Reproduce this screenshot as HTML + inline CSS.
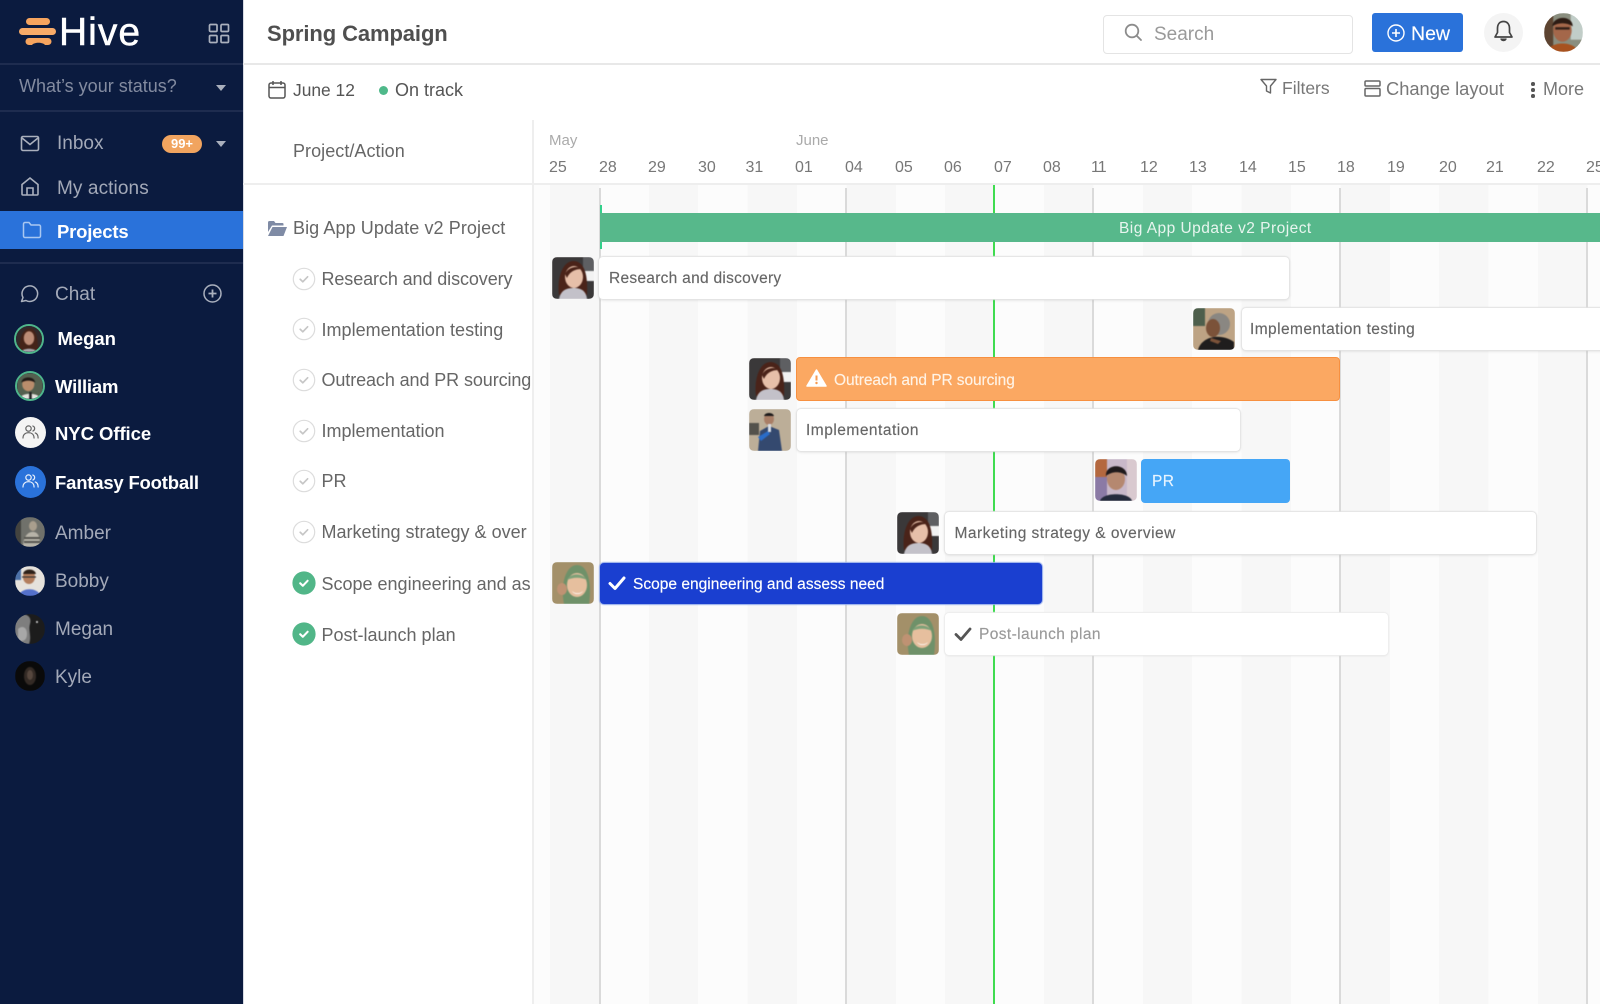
<!DOCTYPE html>
<html><head><meta charset="utf-8"><title>Spring Campaign</title>
<style>
html,body{margin:0;padding:0;width:1600px;height:1004px;overflow:hidden;background:#fff;font-family:"Liberation Sans",sans-serif;color:#666}
#root{position:absolute;left:0;top:0;width:1600px;height:1004px;overflow:hidden;filter:blur(.35px)}
.a{position:absolute;white-space:nowrap}
.t{position:absolute;white-space:nowrap;line-height:24px;height:24px;transform:translateY(-12px)}
#side{position:absolute;left:0;top:0;width:243px;height:1004px;background:#0b1b3f;border-right:1px solid #d8dbe3;overflow:hidden}
.s{font-size:19px;color:#a3a9b8}
.w{color:#fff;font-weight:bold;font-size:18.5px;letter-spacing:-.2px}
.tree{font-size:18px;color:#666;overflow:hidden;width:210px}
.d{position:absolute;top:155.5px;font-size:16px;color:#777;line-height:24px}
.av{position:absolute;width:42px;height:42px;border-radius:5px;overflow:hidden}
.av svg,.ca svg{display:block;width:100%;height:100%;filter:blur(.6px)}
.ca{position:absolute;width:30px;height:30px;border-radius:50%;overflow:hidden}
.bar{position:absolute;border-radius:4px;box-sizing:border-box;background:#fff;box-shadow:0 0 1px 1px #e3e3e3,0 1px 3px rgba(0,0,0,.12);font-size:15.5px;color:#666;letter-spacing:.4px;white-space:nowrap;-webkit-text-stroke:.15px currentColor}
.bar span{position:absolute;top:50%;transform:translateY(calc(-50% + 1px))}
.vl{position:absolute;top:188px;width:2px;height:816px;background:#dadada}
.ck{position:absolute;left:292px;width:24px;height:24px}
</style></head><body>

<svg width="0" height="0" style="position:absolute">
<defs>
<symbol id="w1" viewBox="0 0 42 42"><rect width="42" height="42" fill="#3a3839"/><rect x="31" y="0" width="11" height="14" fill="#5e5f62"/><rect x="33" y="14" width="9" height="10" fill="#f2f2f2"/><path d="M7 38C5 24 9 5 21 4c12 0 15 15 14 34z" fill="#4a2319"/><ellipse cx="22" cy="20" rx="9" ry="11" fill="#e6bfa9"/><path d="M13 17c3-7 12-9 17-5-6 0-12 2-15 9z" fill="#4a2319"/><path d="M7 42c2-10 9-11 15-11s12 2 13 11z" fill="#c3c1c9"/></symbol>
<symbol id="m1" viewBox="0 0 42 42"><rect width="42" height="42" fill="#bcae98"/><rect y="14" width="10" height="12" fill="#54524c"/><ellipse cx="20" cy="10" rx="5" ry="6" fill="#a97e66"/><path d="M15 7c1-4 9-4 10 0z" fill="#1c1a1a"/><path d="M9 42l2-20 9-5 10 4 3 21z" fill="#34496f"/><path d="M9 28l10-6 2 3-9 7z" fill="#2a6cc8"/><rect x="19" y="15" width="3" height="8" fill="#d8dce4"/></symbol>
<symbol id="w2" viewBox="0 0 42 42"><rect width="42" height="42" fill="#a39069"/><path d="M12 42C8 22 14 3 25 3s15 18 12 39z" fill="#6f9169"/><ellipse cx="25" cy="23" rx="10" ry="12" fill="#e6bf9e"/><path d="M15 18c3-7 15-8 20 0-6-3-14-3-20 0z" fill="#7ea178"/><path d="M20 29c3 3 8 3 11 0-2 4-9 4-11 0z" fill="#fff"/><ellipse cx="10" cy="27" rx="5" ry="6" fill="#bf9273"/></symbol>
<symbol id="w3" viewBox="0 0 42 42"><rect width="42" height="42" fill="#bda384"/><rect width="12" height="18" fill="#4e5f4c"/><ellipse cx="26" cy="16" rx="11" ry="11" fill="#8a8782"/><ellipse cx="20" cy="20" rx="7" ry="9" fill="#7b5239"/><path d="M5 42c3-13 22-18 36-8v8z" fill="#1f1d1d"/><path d="M18 30l10 3-3 3-8-3z" fill="#7b5239"/></symbol>
<symbol id="m2" viewBox="0 0 42 42"><rect width="42" height="42" fill="#c8b8c9"/><rect width="12" height="18" fill="#b4683f"/><rect y="18" width="12" height="24" fill="#8b7aa5"/><rect x="32" width="10" height="42" fill="#d9c9cf"/><ellipse cx="21" cy="20" rx="9" ry="11" fill="#b58870"/><path d="M11 17C10 4 32 4 32 17c-6-5-15-5-21 0z" fill="#1f1a1c"/><path d="M5 42c2-9 30-9 32 0z" fill="#252b3c"/></symbol>
<symbol id="c1" viewBox="0 0 30 30"><rect width="30" height="30" fill="#33292a"/><path d="M4 30C3 14 8 3 16 3s10 14 9 27z" fill="#452318"/><ellipse cx="15" cy="14" rx="6" ry="8" fill="#bd8c76"/><path d="M6 30c2-5 16-5 18 0z" fill="#a7a5ab"/></symbol>
<symbol id="c2" viewBox="0 0 30 30"><rect width="30" height="30" fill="#54604f"/><ellipse cx="13" cy="13" rx="7" ry="8" fill="#b98d6c"/><path d="M5 11c1-8 15-8 16 0-5-3-11-3-16 0z" fill="#201a17"/><path d="M3 30c2-8 22-8 24 0z" fill="#e5e4df"/><rect x="14" y="22" width="3" height="8" fill="#222"/></symbol>
<symbol id="c3" viewBox="0 0 30 30"><rect width="30" height="30" fill="#70716b"/><ellipse cx="18" cy="9" rx="4" ry="5" fill="#a99e8d"/><path d="M8 30c0-10 5-16 11-15s6 9 6 15z" fill="#b7b3a8"/><path d="M9 21h16M9 25h16" stroke="#55554f" stroke-width="2"/><rect width="6" height="30" fill="#43433f"/></symbol>
<symbol id="c4" viewBox="0 0 30 30"><rect width="30" height="30" fill="#e6e2dc"/><rect width="6" height="14" fill="#4c71a8"/><ellipse cx="14" cy="11" rx="6" ry="7" fill="#b37e5d"/><path d="M8 8c1-6 12-6 13 0z" fill="#2d2119"/><path d="M7 11h14" stroke="#333" stroke-width="1.2"/><path d="M4 30c1-9 20-9 21 0z" fill="#5470c9"/></symbol>
<symbol id="c5" viewBox="0 0 30 30"><rect width="30" height="30" fill="#1c1c1c"/><path d="M0 6C6-3 18 0 15 10c-2 7 2 12-1 20H0z" fill="#7e7e7e"/><path d="M3 15c4-4 9-2 9 5s-5 8-9 6z" fill="#a8a8a8"/><circle cx="22" cy="8" r="1" fill="#ddd"/></symbol>
<symbol id="c6" viewBox="0 0 30 30"><rect width="30" height="30" fill="#0a0a0a"/><ellipse cx="15" cy="15" rx="6" ry="9" fill="#332a25"/><ellipse cx="15" cy="14" rx="3" ry="5" fill="#56473e"/></symbol>
<symbol id="u1" viewBox="0 0 38 38"><rect width="38" height="38" fill="#8a8e7f"/><rect x="26" width="12" height="26" fill="#c1cdc8"/><rect width="9" height="38" fill="#5d4431"/><ellipse cx="18" cy="17" rx="9" ry="11" fill="#a4674a"/><path d="M8 13C9 2 28 2 28 13c-6-4-14-4-20 0z" fill="#2d1c14"/><path d="M11 15h14" stroke="#332018" stroke-width="2.4"/><path d="M3 38c2-11 28-11 30 0z" fill="#a7521f"/></symbol>
<symbol id="ppl" viewBox="0 0 24 24"><g fill="none" stroke="currentColor" stroke-width="1.5" stroke-linecap="round"><circle cx="9.500" cy="7" r="3.400"/><path d="M2.500 19c0-4.500 3-6.800 7-6.800s7 2.300 7 6.800"/><path d="M15 3.800a3.400 3.400 0 0 1 0 6.400M18 12.600c2.200.8 3.600 3 3.600 6.400"/></g></symbol>
<symbol id="ok" viewBox="0 0 24 24"><circle cx="12" cy="12" r="10.700" fill="#fff" stroke="#dcdcdc" stroke-width="1.200"/><path d="M8.200 12.300l2.600 2.500 4.800-5" fill="none" stroke="#c6c6c6" stroke-width="1.700" stroke-linecap="round" stroke-linejoin="round"/></symbol>
<symbol id="done" viewBox="0 0 24 24"><circle cx="12" cy="12" r="11.600" fill="#51b688"/><path d="M8.200 12.300l2.600 2.500 4.800-5" fill="none" stroke="#fff" stroke-width="2.100" stroke-linecap="round" stroke-linejoin="round"/></symbol>
</defs></svg>

<div id="root">
<!-- Sidebar -->
<div id="side">
<svg class="a" style="left:18px;top:17px" width="40" height="30" viewBox="0 0 40 30"><rect x="8" y="1" width="24" height="7" rx="3.500" fill="#f6a45e"/><rect x="1" y="11" width="37" height="7" rx="3.500" fill="#f8ab68"/><path d="M11 21h19a3.400 3.400 0 0 1 0 7h-3c-2-3-11-3-13 0h-3a3.400 3.400 0 0 1 0-7z" fill="#f6a45e"/></svg>
<div class="t" style="left:59px;top:32.500px;font-size:39px;line-height:40px;height:40px;transform:translateY(-20px);color:#fff;letter-spacing:1px;-webkit-text-stroke:.5px #fff">Hive</div>
<svg class="a" style="left:208px;top:23px" width="22" height="21" viewBox="0 0 22 21" fill="none" stroke="#aab0bd" stroke-width="1.700"><rect x="1.500" y="1.500" width="7.500" height="7" rx="1"/><rect x="13" y="1.500" width="7.500" height="7" rx="1"/><rect x="1.500" y="12.500" width="7.500" height="7" rx="1"/><rect x="13" y="12.500" width="7.500" height="7" rx="1"/></svg>
<div class="a" style="left:0;top:63px;width:243px;height:2px;background:#1e2c4f"></div>
<div class="t" style="left:19px;top:86px;font-size:18px;color:#838ba0">What’s your status?</div>
<div class="a" style="left:216px;top:85px;border:5px solid transparent;border-top:6px solid #aab0bd;border-bottom:0"></div>
<div class="a" style="left:0;top:110px;width:243px;height:2px;background:#1e2c4f"></div>

<svg class="a" style="left:20px;top:135px" width="20" height="17" viewBox="0 0 20 17" fill="none" stroke="#aab0bd" stroke-width="1.600"><rect x="1.500" y="1.500" width="17" height="14" rx="1.500"/><path d="M2 3l8 6.500L18 3"/></svg>
<div class="t s" style="left:57px;top:144px">Inbox</div>
<div class="a" style="left:162px;top:135px;width:40px;height:18px;border-radius:9px;background:#f1a45f;color:#fff;font-size:13px;font-weight:bold;line-height:18px;text-align:center">99+</div>
<div class="a" style="left:216px;top:141px;border:5px solid transparent;border-top:6px solid #aab0bd;border-bottom:0"></div>

<svg class="a" style="left:20px;top:176px" width="20" height="20" viewBox="0 0 20 20" fill="none" stroke="#aab0bd" stroke-width="1.600"><path d="M2 8.500L10 2l8 6.500V18a1 1 0 0 1-1 1H3a1 1 0 0 1-1-1z"/><path d="M7 19v-7h6v7"/></svg>
<div class="t s" style="left:57px;top:189px;letter-spacing:.1px">My actions</div>

<div class="a" style="left:0;top:211px;width:243px;height:38px;background:#2a72da"></div>
<svg class="a" style="left:22px;top:221px" width="20" height="18" viewBox="0 0 20 18" fill="none" stroke="#a9c7f1" stroke-width="1.500"><path d="M1.500 3a1.500 1.500 0 0 1 1.500-1.500h4l2 2.500h8a1.500 1.500 0 0 1 1.500 1.500V15a1.500 1.500 0 0 1-1.500 1.500H3A1.500 1.500 0 0 1 1.500 15z"/></svg>
<div class="t w" style="left:57px;top:232px">Projects</div>
<div class="a" style="left:0;top:262px;width:243px;height:2px;background:#1e2c4f"></div>

<svg class="a" style="left:20px;top:284px" width="19" height="19" viewBox="0 0 19 19" fill="none" stroke="#aab0bd" stroke-width="1.500"><path d="M3 13.500A7.800 7.800 0 1 1 6 16.500L1.500 17.500z" stroke-linejoin="round"/></svg>
<div class="t s" style="left:55px;top:295px">Chat</div>
<svg class="a" style="left:203px;top:284px" width="19" height="19" viewBox="0 0 19 19" fill="none" stroke="#aab0bd" stroke-width="1.500"><circle cx="9.500" cy="9.500" r="8.500"/><path d="M9.500 5.500v8M5.500 9.500h8" stroke-width="1.800"/></svg>

<div class="ca" style="left:14px;top:324px;border:2px solid #4fb68b;box-sizing:border-box"><svg><use href="#c1"/></svg></div>
<div class="t w" style="left:57.500px;top:339px;letter-spacing:-.05px">Megan</div>
<div class="ca" style="left:15px;top:371px;border:2px solid #4fb68b;box-sizing:border-box"><svg><use href="#c2"/></svg></div>
<div class="t w" style="left:55px;top:387px">William</div>
<div class="a" style="left:15px;top:417px;width:31px;height:31px;border-radius:50%;background:#f4f4f4;color:#666"><svg class="a" style="left:6px;top:6px" width="19" height="19"><use href="#ppl"/></svg></div>
<div class="t w" style="left:55px;top:434px;letter-spacing:-.05px">NYC Office</div>
<div class="a" style="left:15px;top:466px;width:31px;height:32px;border-radius:50%;background:#2a72da;color:#e8f0fc"><svg class="a" style="left:6px;top:6px" width="19" height="19"><use href="#ppl"/></svg></div>
<div class="t w" style="left:55px;top:483px">Fantasy Football</div>
<div class="ca" style="left:15px;top:517px"><svg><use href="#c3"/></svg></div>
<div class="t s" style="left:55px;top:533.500px">Amber</div>
<div class="ca" style="left:15px;top:566px"><svg><use href="#c4"/></svg></div>
<div class="t s" style="left:55px;top:582px">Bobby</div>
<div class="ca" style="left:15px;top:614px"><svg><use href="#c5"/></svg></div>
<div class="t s" style="left:55px;top:630px">Megan</div>
<div class="ca" style="left:15px;top:661px"><svg><use href="#c6"/></svg></div>
<div class="t s" style="left:55px;top:678px">Kyle</div>
</div>

<!-- Top header -->
<div class="t" style="left:267px;top:34px;font-size:22px;font-weight:bold;color:#4f4f4f;letter-spacing:-.1px">Spring Campaign</div>
<div class="a" style="left:1103px;top:15px;width:248px;height:37px;border:1px solid #e4e4e4;border-radius:4px;background:#fff"></div>
<svg class="a" style="left:1124px;top:23px" width="19" height="19" viewBox="0 0 19 19" fill="none" stroke="#8c8c8c" stroke-width="1.800" stroke-linecap="round"><circle cx="8" cy="8" r="6.300"/><path d="M12.700 12.700L17 17"/></svg>
<div class="t" style="left:1154px;top:35px;font-size:19px;color:#9a9a9a">Search</div>
<div class="a" style="left:1372px;top:13px;width:91px;height:39px;border-radius:3px;background:#2a72da"></div>
<svg class="a" style="left:1387px;top:23.500px" width="18" height="18" viewBox="0 0 18 18" fill="none" stroke="#fff" stroke-width="1.400"><circle cx="9" cy="9" r="8"/><path d="M9 5v8M5 9h8" stroke-width="1.600"/></svg>
<div class="t" style="left:1411px;top:33.500px;font-size:19.500px;color:#fff;-webkit-text-stroke:.15px #fff">New</div>
<div class="a" style="left:1484px;top:13px;width:39px;height:39px;border-radius:50%;background:#f4f4f4"></div>
<svg class="a" style="left:1493px;top:19px" width="21" height="24" viewBox="0 0 21 24" fill="none" stroke="#444" stroke-width="1.700" stroke-linejoin="round"><path d="M10.500 2.500c-4 0-6 3-6 7v4L2 18h17l-2.500-4.500v-4c0-4-2-7-6-7z"/><path d="M8 19.500c.5 2.500 4.500 2.500 5 0" fill="#444"/></svg>
<div class="a" style="left:1544px;top:13px;width:39px;height:39px;border-radius:50%;overflow:hidden"><svg width="39" height="39" style="filter:blur(.5px);display:block"><use href="#u1"/></svg></div>
<div class="a" style="left:243px;top:63px;width:1357px;height:2px;background:#e8e8e8"></div>

<!-- Sub header -->
<svg class="a" style="left:268px;top:80px" width="18" height="19" viewBox="0 0 18 19" fill="none" stroke="#555" stroke-width="1.500"><rect x="1" y="3" width="16" height="15" rx="2"/><path d="M1 7.500h16M5 1v4M13 1v4"/></svg>
<div class="t" style="left:293px;top:90px;font-size:17.400px;color:#555">June 12</div>
<div class="a" style="left:379px;top:85.500px;width:9px;height:9px;border-radius:50%;background:#4fb98a"></div>
<div class="t" style="left:395px;top:90px;font-size:18px;color:#555">On track</div>
<svg class="a" style="left:1260px;top:78px" width="17" height="17" viewBox="0 0 17 17" fill="none" stroke="#666" stroke-width="1.400" stroke-linejoin="round"><path d="M1 1.500h15l-5.500 6.500v7l-4-2V8z"/></svg>
<div class="t" style="left:1282px;top:88px;font-size:17.500px;color:#777">Filters</div>
<svg class="a" style="left:1364px;top:80px" width="17" height="17" viewBox="0 0 17 17" fill="none" stroke="#666" stroke-width="1.500"><rect x="1" y="1" width="15" height="5" rx="1"/><rect x="1" y="8.500" width="15" height="7.500" rx="1"/></svg>
<div class="t" style="left:1386px;top:89px;font-size:18.300px;color:#777">Change layout</div>
<div class="a" style="left:1531px;top:82px;width:3.500px;height:3.500px;border-radius:50%;background:#555"></div>
<div class="a" style="left:1531px;top:88px;width:3.500px;height:3.500px;border-radius:50%;background:#555"></div>
<div class="a" style="left:1531px;top:94px;width:3.500px;height:3.500px;border-radius:50%;background:#555"></div>
<div class="t" style="left:1543px;top:89px;font-size:18px;color:#777">More</div>

<!-- Gantt background -->
<div class="a" style="left:533px;top:184px;width:1067px;height:820px;background:#fcfcfc"></div>
<div class="a" style="left:549.600px;top:184px;width:1050.400px;height:820px;background:repeating-linear-gradient(90deg,#f7f7f7 0,#f7f7f7 49.400px,#fcfcfc 49.400px,#fcfcfc 98.800px)"></div>
<div class="a" style="left:243px;top:183px;width:1357px;height:2px;background:#eeeeee"></div>
<div class="a" style="left:532px;top:120px;width:2px;height:884px;background:#eeeeee"></div>
<div class="vl" style="left:599px"></div><div class="vl" style="left:845px"></div><div class="vl" style="left:1092px"></div><div class="vl" style="left:1339px"></div><div class="vl" style="left:1586px"></div>
<div class="a" style="left:993px;top:185px;width:2px;height:819px;background:#3fdc50"></div>

<!-- Timeline header -->
<div class="t" style="left:293px;top:151px;font-size:18px;color:#666;letter-spacing:.05px">Project/Action</div>
<div class="t" style="left:549px;top:140.500px;font-size:15px;color:#aaa">May</div>
<div class="t" style="left:796px;top:140.500px;font-size:15px;color:#aaa">June</div>
<div class="d" style="left:549px">25</div><div class="d" style="left:599px">28</div><div class="d" style="left:648px">29</div><div class="d" style="left:698px">30</div><div class="d" style="left:745.500px">31</div><div class="d" style="left:795px">01</div><div class="d" style="left:845px">04</div><div class="d" style="left:895px">05</div><div class="d" style="left:944px">06</div><div class="d" style="left:994px">07</div><div class="d" style="left:1043px">08</div><div class="d" style="left:1091px;letter-spacing:-1px">11</div><div class="d" style="left:1140px">12</div><div class="d" style="left:1189px">13</div><div class="d" style="left:1239px">14</div><div class="d" style="left:1288px">15</div><div class="d" style="left:1337px">18</div><div class="d" style="left:1387px">19</div><div class="d" style="left:1439px">20</div><div class="d" style="left:1486px">21</div><div class="d" style="left:1537px">22</div><div class="d" style="left:1586px">25</div>

<!-- Tree -->
<svg class="a" style="left:268px;top:221px" width="19" height="15" viewBox="0 0 19 15" fill="#7f8ba5"><path d="M0 1.500A1.500 1.500 0 0 1 1.500 0h4.500l1.500 2h7a1 1 0 0 1 1 1v1.500H4L0 11z"/><path d="M4.500 6H19l-3.500 9H0z"/></svg>
<div class="t tree" style="left:293px;top:228px;width:235px;letter-spacing:.09px">Big App Update v2 Project</div>
<svg class="ck" style="top:267px"><use href="#ok"/></svg><div class="t tree" style="left:321.500px;top:279px;letter-spacing:-.1px">Research and discovery</div>
<svg class="ck" style="top:317px"><use href="#ok"/></svg><div class="t tree" style="left:321.500px;top:329.500px;letter-spacing:.03px">Implementation testing</div>
<svg class="ck" style="top:368px"><use href="#ok"/></svg><div class="t tree" style="left:321.500px;top:380px;letter-spacing:-.1px">Outreach and PR sourcing</div>
<svg class="ck" style="top:419px"><use href="#ok"/></svg><div class="t tree" style="left:321.500px;top:431px">Implementation</div>
<svg class="ck" style="top:469px"><use href="#ok"/></svg><div class="t tree" style="left:321.500px;top:481px">PR</div>
<svg class="ck" style="top:520px"><use href="#ok"/></svg><div class="t tree" style="left:321.500px;top:532px">Marketing strategy &amp; over</div>
<svg class="ck" style="top:571px"><use href="#done"/></svg><div class="t tree" style="left:321.500px;top:584px">Scope engineering and as</div>
<svg class="ck" style="top:622px"><use href="#done"/></svg><div class="t tree" style="left:321.500px;top:635px">Post-launch plan</div>

<!-- Bars -->
<div class="a" style="left:600px;top:205px;width:2px;height:44px;background:#33d08b"></div>
<div class="a" style="left:600px;top:213px;width:1000px;height:29px;background:#57b88b;color:#e8f5ef;font-size:15.500px;line-height:31px;letter-spacing:.47px"><span style="position:absolute;left:519px">Big App Update v2 Project</span></div>

<div class="av" style="left:552px;top:257px"><svg><use href="#w1"/></svg></div>
<div class="bar" style="left:599px;top:257px;width:690px;height:42px;letter-spacing:.28px"><span style="left:10px">Research and discovery</span></div>

<div class="av" style="left:1193px;top:308px"><svg><use href="#w3"/></svg></div>
<div class="bar" style="left:1242px;top:308px;width:400px;height:42px;letter-spacing:.42px"><span style="left:8px">Implementation testing</span></div>

<div class="av" style="left:749px;top:358px"><svg><use href="#w1"/></svg></div>
<div class="bar" style="left:796px;top:357px;width:544px;height:44px;background:#fba862;border:1px solid #f79040;box-shadow:none;color:#fff3e6;letter-spacing:-.08px"><svg class="a" style="left:9px;top:11px" width="21" height="18" viewBox="0 0 21 18"><path d="M10.500 1L20 17H1z" fill="#fff" stroke="#fff" stroke-width="1.500" stroke-linejoin="round"/><path d="M10.500 6.500v5" stroke="#f79a50" stroke-width="2"/><circle cx="10.500" cy="14" r="1.200" fill="#f79a50"/></svg><span style="left:37px;margin-top:1px">Outreach and PR sourcing</span></div>

<div class="av" style="left:749px;top:409px"><svg><use href="#m1"/></svg></div>
<div class="bar" style="left:797px;top:409px;width:443px;height:42px;letter-spacing:.5px"><span style="left:9px">Implementation</span></div>

<div class="av" style="left:1095px;top:459px"><svg><use href="#m2"/></svg></div>
<div class="bar" style="left:1141px;top:459px;width:149px;height:44px;background:#45a6f6;box-shadow:none;color:#e8f4ff"><span style="left:11px">PR</span></div>

<div class="av" style="left:897px;top:512px"><svg><use href="#w1"/></svg></div>
<div class="bar" style="left:945px;top:512px;width:591px;height:42px;letter-spacing:.47px"><span style="left:9.500px">Marketing strategy &amp; overview</span></div>

<div class="av" style="left:552px;top:562px"><svg><use href="#w2"/></svg></div>
<div class="bar" style="left:600px;top:563px;width:442px;height:41px;background:#1a3fd0;box-shadow:0 0 1px 1px #8fa8ea;color:#fff;letter-spacing:.02px"><svg class="a" style="left:8px;top:12px" width="18" height="16" viewBox="0 0 18 16" fill="none" stroke="#fff" stroke-width="3" stroke-linecap="round" stroke-linejoin="round"><path d="M2 8.500l5 5L16 3"/></svg><span style="left:33px">Scope engineering and assess need</span></div>

<div class="av" style="left:897px;top:613px"><svg><use href="#w2"/></svg></div>
<div class="bar" style="left:945px;top:613px;width:443px;height:42px;box-shadow:0 0 1px 1px #ececec,0 1px 2px rgba(0,0,0,.08);color:#999"><svg class="a" style="left:9px;top:13px" width="18" height="16" viewBox="0 0 18 16" fill="none" stroke="#555" stroke-width="2.800" stroke-linecap="round" stroke-linejoin="round"><path d="M2 8.500l5 5L16 3"/></svg><span style="left:34px">Post-launch plan</span></div>
</div>
</body></html>
